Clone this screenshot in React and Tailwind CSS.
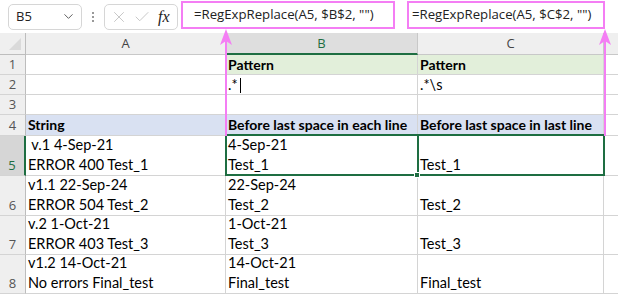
import React from 'react';
import { ChevronDown, X, Check } from 'lucide-react';

const PINK = '#f47ef4';

const rows = [
    { n: '1', h: 20, a: '', b: 'Pattern', c: 'Pattern', bold: true, fill: 'bg-[#e2efda]', fillA: false },
    { n: '2', h: 20, a: '', b: '.*', c: '.*\\s', cursor: true },
    { n: '3', h: 20, a: '', b: '', c: '' },
    { n: '4', h: 21, a: 'String', b: 'Before last space in each line', c: 'Before last space in last line', bold: true, fill: 'bg-[#d9e1f2]', fillA: true },
    { n: '5', h: 40, a: [' v.1 4-Sep-21', 'ERROR 400 Test_1'], b: ['4-Sep-21', 'Test_1'], c: ['', 'Test_1'], sel: true },
    { n: '6', h: 40, a: ['v1.1 22-Sep-24', 'ERROR 504 Test_2'], b: ['22-Sep-24', 'Test_2'], c: ['', 'Test_2'] },
    { n: '7', h: 39, a: ['v.2 1-Oct-21', 'ERROR 403 Test_3'], b: ['1-Oct-21', 'Test_3'], c: ['', 'Test_3'] },
    { n: '8', h: 39, a: ['v1.2 14-Oct-21', 'No errors Final_test'], b: ['14-Oct-21', 'Final_test'], c: ['', 'Final_test'] },
];

function CellText({ value }) {
    if (Array.isArray(value)) {
        return (
            <div className="flex flex-col justify-end h-full">
                {value.map((line, i) => (
                    <div key={i} className="h-[20px] leading-[20px] whitespace-pre">{line}</div>
                ))}
            </div>
        );
    }
    return <div className="leading-[20px] whitespace-pre">{value}</div>;
}

function Arrow({ x }) {
    return (
        <svg className="absolute top-[28px]" style={{ left: x - 8 }} width="16" height="108" viewBox="0 0 16 108">
            <rect x="7" y="8" width="2" height="100" fill={PINK} />
            <polygon points="8,1 14,17 8,13 2,17" fill={PINK} />
        </svg>
    );
}

export default function App() {
    return (
        <div className="relative w-[618px] h-[296px] overflow-hidden bg-white text-black" style={{ fontFamily: 'Lato, sans-serif' }}>
            {/* Formula bar */}
            <div className="h-[33px] flex items-center bg-white" style={{ fontFamily: '"Open Sans", sans-serif' }}>
                <div className="ml-[8px] w-[74px] h-[26px] border border-[#d6d6d6] rounded-[5px] flex items-center justify-between pl-[7px] pr-[5px] text-[13px] text-[#222]">
                    <span>B5</span>
                    <ChevronDown size={15} strokeWidth={1.5} className="text-[#555]" />
                </div>
                <div className="w-[22px] flex flex-col items-center gap-[2px]">
                    <span className="w-[2px] h-[2px] bg-[#777] rounded-full" />
                    <span className="w-[2px] h-[2px] bg-[#777] rounded-full" />
                    <span className="w-[2px] h-[2px] bg-[#777] rounded-full" />
                </div>
                <div className="w-[74px] h-[26px] border border-[#d6d6d6] rounded-[5px] flex items-center px-[5px] gap-[5px]">
                    <X size={18} strokeWidth={1.2} className="text-[#c2c2c2]" />
                    <Check size={18} strokeWidth={1.2} className="text-[#c2c2c2]" />
                    <span className="text-[16px] italic text-[#222] ml-[2px]" style={{ fontFamily: '"Liberation Serif", serif' }}>fx</span>
                </div>
                <div className="ml-[3px] w-[214px] h-[28px] mt-[-3px] border-2 border-[#f47ef4] flex items-center pl-[11px] text-[13.2px] text-[#222] whitespace-pre">
                    =RegExpReplace(A5, $B$2, "")
                </div>
                <div className="ml-[12px] w-[198px] h-[28px] mt-[-3px] border-2 border-[#f47ef4] flex items-center pl-[3px] text-[13.2px] text-[#222] whitespace-pre">
                    =RegExpReplace(A5, $C$2, "")
                </div>
            </div>

            {/* Sheet */}
            <div className="grid grid-cols-[26px_200px_192px_186px_14px] text-[14.5px]">
                {/* column headers */}
                <div className="h-[22px] bg-[#efefef] border-r border-b border-[#bdbdbd] relative">
                    <div className="absolute right-[4px] bottom-[4px] w-0 h-0 border-l-[12px] border-l-transparent border-b-[12px] border-b-[#dadada]" />
                </div>
                <div className="h-[22px] bg-[#efefef] border-r border-b border-[#c8c8c8] text-center text-[13px] leading-[21px] text-[#444]" style={{ fontFamily: '"Open Sans", sans-serif' }}>A</div>
                <div className="h-[22px] bg-[#dedede] border-r border-[#c8c8c8] border-b-2 border-b-[#1e6e42] text-center text-[13px] leading-[21px] text-[#1e6e42]" style={{ fontFamily: '"Open Sans", sans-serif' }}>B</div>
                <div className="h-[22px] bg-[#efefef] border-r border-b border-[#c8c8c8] text-center text-[13px] leading-[21px] text-[#444]" style={{ fontFamily: '"Open Sans", sans-serif' }}>C</div>
                <div className="h-[22px] bg-[#efefef] border-b border-[#c8c8c8]" />

                {rows.map((r) => (
                    <React.Fragment key={r.n}>
                        <div
                            className={`flex items-end justify-center pb-[1px] text-[13px] ${r.sel ? 'bg-[#d6d6d6] text-[#1e6e42] border-r-2 border-r-[#1e6e42]' : 'bg-[#efefef] text-[#555] border-r border-r-[#bdbdbd]'} border-b border-b-[#d4d4d4]`}
                            style={{ height: r.h, fontFamily: '"Open Sans", sans-serif' }}
                        >
                            <span className="leading-[18px]">{r.n}</span>
                        </div>
                        <div className={`border-r border-b border-[#d4d4d4] pl-[2px] ${r.fillA ? r.fill : ''} ${r.bold ? 'font-bold text-[14px]' : ''}`} style={{ height: r.h }}>
                            <CellText value={r.a} />
                        </div>
                        <div className={`border-r border-b border-[#d4d4d4] pl-[2px] ${r.fill || ''} ${r.bold ? 'font-bold text-[14px]' : ''}`} style={{ height: r.h }}>
                            {r.cursor ? (
                                <div className="leading-[20px] flex items-center">
                                    <span>.*</span>
                                    <span className="ml-[2px] w-[1px] h-[15px] bg-black" />
                                </div>
                            ) : (
                                <CellText value={r.b} />
                            )}
                        </div>
                        <div className={`border-r border-b border-[#d4d4d4] pl-[2px] ${r.fill || ''} ${r.bold ? 'font-bold text-[14px]' : ''}`} style={{ height: r.h }}>
                            <CellText value={r.c} />
                        </div>
                        <div className="border-b border-[#d4d4d4]" style={{ height: r.h }} />
                    </React.Fragment>
                ))}
            </div>

            {/* selection borders */}
            <div className="absolute left-[225px] top-[134px] w-[194px] h-[42px] border-2 border-[#1e6e42]" />
            <div className="absolute left-[417px] top-[134px] w-[188px] h-[42px] border-2 border-[#1e6e42]" />
            <div className="absolute left-[414px] top-[172px] w-[6px] h-[6px] bg-[#1e6e42] border border-white" />

            {/* pink arrows */}
            <Arrow x={226} />
            <Arrow x={605} />
        </div>
    );
}
